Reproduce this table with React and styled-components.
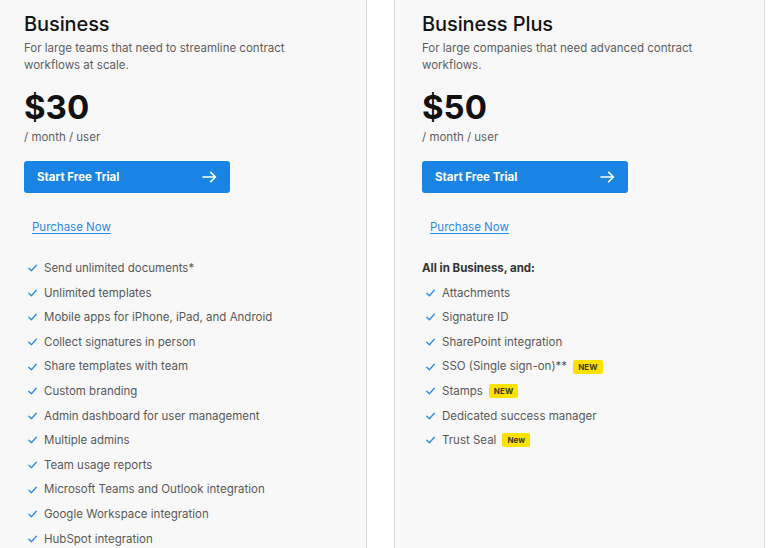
import styled, { createGlobalStyle } from "styled-components";

const GlobalStyle = createGlobalStyle`
  html, body {
    margin: 0;
    padding: 0;
    background: #ffffff;
    font-family: Inter, "Liberation Sans", sans-serif;
    overflow: hidden;
  }
  * {
    box-sizing: border-box;
  }
`;

const Page = styled.div`
  display: flex;
  align-items: stretch;
  gap: 27px;
  height: 548px;
  width: 768px;
`;

const Card = styled.div`
  display: flex;
  flex-direction: column;
  flex: none;
  width: ${(p) => p.width}px;
  padding: 12px 0 0 ${(p) => p.pad}px;
  background: #f8f8f8;
  border-right: 1px solid #dadada;
  border-left: ${(p) => (p.first ? "none" : "1px solid #dadada")};
  overflow: hidden;
  & > * {
    flex-shrink: 0;
  }
`;

const Title = styled.h2`
  margin: 0;
  font-size: 20px;
  line-height: 24px;
  font-weight: 500;
  color: #141414;
  letter-spacing: -0.1px;
`;

const Desc = styled.p`
  margin: 4px 0 0;
  width: 300px;
  font-size: 11.5px;
  line-height: 17px;
  color: #5e5e5e;
`;

const Price = styled.div`
  margin-top: 14px;
  font-size: 33px;
  line-height: 38px;
  font-weight: 700;
  color: #111;
`;

const Per = styled.div`
  margin-top: 3px;
  font-size: 11.5px;
  line-height: 17px;
  color: #5e5e5e;
`;

const TrialButton = styled.button`
  display: flex;
  align-items: center;
  justify-content: space-between;
  margin-top: 15px;
  width: 206px;
  height: 32px;
  padding: 0 13px;
  border: 0;
  border-radius: 3px;
  background: #1a84e4;
  color: #fff;
  font-family: inherit;
  font-size: 11.5px;
  font-weight: 700;
  cursor: pointer;
`;

const PurchaseLink = styled.a`
  margin: 26px 0 0 8px;
  align-self: flex-start;
  font-size: 11.5px;
  line-height: 17px;
  color: #2a8ae6;
  text-decoration: underline;
  text-underline-offset: 2px;
`;

const FeatureList = styled.ul`
  list-style: none;
  margin: 20px 0 0;
  padding: 0;
`;

const Lead = styled.li`
  font-size: 11.5px;
  line-height: 24.6px;
  font-weight: 700;
  color: #333;
`;

const Feature = styled.li`
  display: flex;
  align-items: center;
  padding-left: 4px;
  font-size: 11.5px;
  line-height: 24.6px;
  color: #595959;
  svg {
    flex: none;
    margin-right: 7px;
  }
`;

const Badge = styled.span`
  display: inline-block;
  margin-left: 6px;
  padding: 0 5px;
  height: 14px;
  line-height: 14px;
  border-radius: 2px;
  background: #ffe100;
  color: #3b3b1a;
  font-size: 8px;
  font-weight: 700;
  letter-spacing: 0.1px;
`;

function Check() {
  return (
    <svg width="9" height="8" viewBox="0 0 9 8" fill="none">
      <path d="M0.8 4.2 L3.4 6.7 L8.3 1.2" stroke="#2a8ae6" strokeWidth="1.3" strokeLinecap="round" strokeLinejoin="round" />
    </svg>
  );
}

function Arrow() {
  return (
    <svg width="15" height="12" viewBox="0 0 15 12" fill="none">
      <path d="M1 6 H13.5 M8.7 1.4 L13.5 6 L8.7 10.6" stroke="#fff" strokeWidth="1.6" strokeLinecap="round" strokeLinejoin="round" />
    </svg>
  );
}

const plans = [
  {
    name: "Business",
    desc: "For large teams that need to streamline contract workflows at scale.",
    price: "$30",
    first: true,
    width: 367,
    pad: 24,
    features: [
      ["Send unlimited documents*"],
      ["Unlimited templates"],
      ["Mobile apps for iPhone, iPad, and Android"],
      ["Collect signatures in person"],
      ["Share templates with team"],
      ["Custom branding"],
      ["Admin dashboard for user management"],
      ["Multiple admins"],
      ["Team usage reports"],
      ["Microsoft Teams and Outlook integration"],
      ["Google Workspace integration"],
      ["HubSpot integration"],
    ],
  },
  {
    name: "Business Plus",
    desc: "For large companies that need advanced contract workflows.",
    price: "$50",
    width: 371,
    pad: 27,
    lead: "All in Business, and:",
    features: [
      ["Attachments"],
      ["Signature ID"],
      ["SharePoint integration"],
      ["SSO (Single sign-on)**", "NEW"],
      ["Stamps", "NEW"],
      ["Dedicated success manager"],
      ["Trust Seal", "New"],
    ],
  },
];

export default function App() {
  return (
    <>
      <GlobalStyle />
      <Page>
        {plans.map((plan) => (
          <Card key={plan.name} first={plan.first} width={plan.width} pad={plan.pad}>
            <Title>{plan.name}</Title>
            <Desc>{plan.desc}</Desc>
            <Price>{plan.price}</Price>
            <Per>/ month / user</Per>
            <TrialButton type="button">
              Start Free Trial
              <Arrow />
            </TrialButton>
            <PurchaseLink href="#">Purchase Now</PurchaseLink>
            <FeatureList>
              {plan.lead && <Lead>{plan.lead}</Lead>}
              {plan.features.map(([text, badge]) => (
                <Feature key={text}>
                  <Check />
                  {text}
                  {badge && <Badge>{badge}</Badge>}
                </Feature>
              ))}
            </FeatureList>
          </Card>
        ))}
      </Page>
    </>
  );
}
